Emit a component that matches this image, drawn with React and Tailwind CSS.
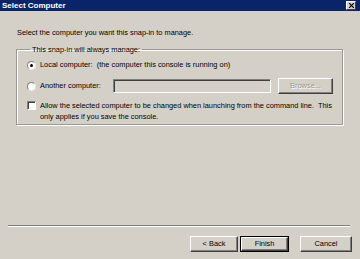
import React from "react";

const font = { fontFamily: '"Liberation Sans", Arial, sans-serif' };

function Radio({ checked }) {
  return (
    <span className="relative w-[9px] h-[9px] rounded-full bg-white border border-t-[#808080] border-l-[#808080] border-b-[#e8e8e8] border-r-[#e8e8e8] flex items-center justify-center shrink-0">
      {checked && <span className="w-[3px] h-[3px] rounded-full bg-black" />}
    </span>
  );
}

function Button({ children, primary, disabled, className = "" }) {
  return (
    <div
      className={`h-[16px] flex items-center justify-center bg-[#D4D0C8] text-[7.4px] ${
        primary ? "border border-black" : ""
      } ${className}`}
    >
      <div className="w-full h-full flex items-center justify-center border border-t-white border-l-white border-b-[#404040] border-r-[#404040] shadow-[inset_-1px_-1px_0_#808080]">
        <span className={disabled ? "text-[#9a968e] [text-shadow:1px_1px_0_#fff]" : "text-black"}>{children}</span>
      </div>
    </div>
  );
}

export default function App() {
  return (
    <div className="w-[360px] h-[259px] bg-[#D4D0C8] flex flex-col overflow-hidden text-black" style={font}>
      {/* Title bar */}
      <div className="h-[11px] bg-[#0A246A] flex items-center justify-between pl-[2px] pr-[4px]">
        <span className="text-white text-[8px] font-bold leading-none">Select Computer</span>
        <div className="w-[10px] h-[9px] bg-[#D4D0C8] border border-t-white border-l-white border-b-[#404040] border-r-[#404040] flex items-center justify-center">
          <svg width="5" height="5" viewBox="0 0 5 5">
            <path d="M0 0L5 5M5 0L0 5" stroke="black" strokeWidth="1.2" />
          </svg>
        </div>
      </div>

      {/* Body */}
      <div className="flex-1 flex flex-col px-[16px] pt-[17px]">
        <p className="text-[7.4px] leading-[9px] pl-[1px]">Select the computer you want this snap-in to manage.</p>

        <fieldset className="mt-[8px] mr-[1px] h-[80px] border border-[#9c988f] shadow-[inset_1px_1px_0_#fff,1px_1px_0_#fff] pl-[10px] pr-[7px]">
          <legend className="text-[7.4px] leading-[9px] ml-[3px] px-[2px]">This snap-in will always manage:</legend>

          <div className="flex items-center gap-[4px] mt-[6px] h-[10px]">
            <Radio checked />
            <span className="text-[7.4px]">Local computer:&nbsp; (the computer this console is running on)</span>
          </div>

          <div className="flex items-center mt-[9px] h-[14px]">
            <Radio />
            <span className="text-[7.4px] ml-[4px] w-[73px]">Another computer:</span>
            <div className="w-[158px] h-[14px] bg-[#D4D0C8] border border-t-[#808080] border-l-[#808080] border-b-white border-r-white shadow-[inset_1px_1px_0_#404040]" />
            <Button disabled className="w-[55px] ml-[7px]">Browse...</Button>
          </div>

          <div className="flex items-start gap-[4px] mt-[7px]">
            <span className="w-[9px] h-[9px] mt-[1px] bg-white border border-t-[#808080] border-l-[#808080] border-b-white border-r-white shadow-[inset_1px_1px_0_#404040] shrink-0" />
            <span className="text-[7.4px] leading-[11px]">
              Allow the selected computer to be changed when launching from the command line.&nbsp; This
              <br />
              only applies if you save the console.
            </span>
          </div>
        </fieldset>

        <div className="flex-1" />
      </div>

      {/* Separator */}
      <div className="mx-[8px] mr-[10px] border-t border-t-[#808080] border-b border-b-white" />

      {/* Buttons */}
      <div className="flex items-center justify-end pr-[8px] pt-[9px] pb-[7px]">
        <Button className="w-[48px]">&lt; Back</Button>
        <Button primary className="w-[49px] ml-[2px]">Finish</Button>
        <Button className="w-[52px] ml-[11px]">Cancel</Button>
      </div>
    </div>
  );
}
